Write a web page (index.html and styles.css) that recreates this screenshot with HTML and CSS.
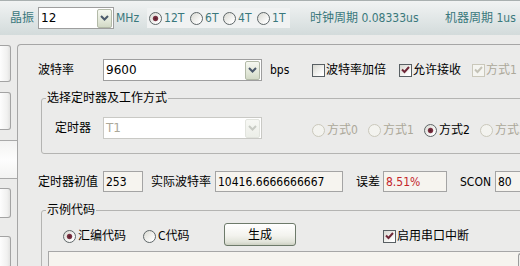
FILE: index.html
```html
<!DOCTYPE html>
<html lang="zh">
<head>
<meta charset="utf-8">
<title>波特率计算</title>
<link rel="stylesheet" href="styles.css">
</head>
<body>
<div class="topbar">
  <span class="t-label">晶振</span>
  <div class="select xtal"><span class="val">12</span><span class="arrow"><svg width="9" height="6" viewBox="0 0 9 6"><path d="M1 1L4.5 4.5L8 1"/></svg></span></div>
  <span class="t-label mhz">MHz</span>
  <div class="t-radios">
    <span class="radio on w41"><i></i>12T</span>
    <span class="radio w33"><i></i>6T</span>
    <span class="radio w34"><i></i>4T</span>
    <span class="radio"><i></i>1T</span>
  </div>
  <span class="t-info clock">时钟周期 0.08333us</span>
  <span class="t-info">机器周期 1us</span>
</div>
<div class="content">
  <div class="sidebar">
    <div class="sgroup first">
      <div class="tab t1"></div>
      <div class="tab t2"></div>
    </div>
    <div class="sgap"></div>
    <div class="sgroup second">
      <div class="tab t3"></div>
      <div class="tab t4"></div>
    </div>
  </div>
  <div class="panel">
    <div class="row r1">
      <span class="lbl w65">波特率</span>
      <div class="select wide"><span class="val">9600</span><span class="arrow"><svg width="9" height="6" viewBox="0 0 9 6"><path d="M1 1L4.5 4.5L8 1"/></svg></span></div>
      <span class="lbl bps">bps</span>
      <span class="check w87"><i></i>波特率加倍</span>
      <span class="check on w73"><i><svg width="9" height="8" viewBox="0 0 9 8"><path d="M1 3.5L3.5 6L8 1"/></svg></i>允许接收</span>
      <span class="check on disabled"><i><svg width="9" height="8" viewBox="0 0 9 8"><path d="M1 3.5L3.5 6L8 1"/></svg></i>方式1</span>
    </div>

    <fieldset class="grp g1">
      <legend>选择定时器及工作方式</legend>
      <div class="row r2">
        <span class="lbl w48">定时器</span>
        <div class="select wide disabled"><span class="val">T1</span><span class="arrow"><svg width="9" height="6" viewBox="0 0 9 6"><path d="M1 1L4.5 4.5L8 1"/></svg></span></div>
        <div class="modes">
          <span class="radio disabled w56"><i></i>方式0</span>
          <span class="radio disabled w56"><i></i>方式1</span>
          <span class="radio on w56"><i></i>方式2</span>
          <span class="radio disabled w56"><i></i>方式3</span>
        </div>
      </div>
    </fieldset>

    <div class="row r3">
      <span class="lbl w65">定时器初值</span>
      <div class="edit w40">253</div>
      <span class="lbl actual">实际波特率</span>
      <div class="edit w128">10416.6666666667</div>
      <span class="lbl err">误差</span>
      <div class="edit w64 red">8.51%</div>
      <span class="lbl scon">SCON</span>
      <div class="edit w40">80</div>
    </div>

    <fieldset class="grp g2">
      <legend>示例代码</legend>
      <div class="row r4">
        <span class="radio on w80"><i></i>汇编代码</span>
        <span class="radio w81"><i></i>C代码</span>
        <span class="btn">生成</span>
        <span class="check on irq"><i><svg width="9" height="8" viewBox="0 0 9 8"><path d="M1 3.5L3.5 6L8 1"/></svg></i>启用串口中断</span>
      </div>
      <div class="code">
        <div class="code-text"></div>
        <div class="code-sb"></div>
      </div>
    </fieldset>
  </div>
</div>
</body>
</html>
```
FILE: styles.css
```css
* { box-sizing: border-box; }
html, body { margin: 0; padding: 0; }
body {
  width: 520px;
  height: 266px;
  overflow: hidden;
  background: #ebebea;
  font-family: "DejaVu Sans Condensed", "DejaVu Sans", "Noto Sans CJK SC", sans-serif;
  font-stretch: semi-condensed;
  font-size: 12px;
  line-height: 16px;
  color: #000;
  white-space: nowrap;
}

/* ---------- top bar ---------- */
.topbar {
  height: 35px;
  border-top: 1px solid #a9b0b0;
  background: linear-gradient(#f1f3f3, #dfe5e5 60%, #d3dbdb);
  display: flex;
  align-items: center;
  padding-left: 10px;
  color: #3a787c;
  overflow: hidden;
}
.t-label { flex-shrink: 0; }
.xtal { margin-left: 4px; width: 76px; height: 20px; }
.xtal .val { font-family: "DejaVu Sans Condensed", "DejaVu Sans", sans-serif; }
.xtal .arrow { height: 18px; }
.mhz { margin-left: 2px; width: 31px; }
.t-radios {
  display: flex;
  align-items: center;
  height: 20px;
  width: 143px;
  flex-shrink: 0;
  padding-left: 2px;
  background: #f0f2f2;
}
.t-info { flex-shrink: 0; }
.clock { margin-left: 20px; width: 135px; }

/* ---------- select ---------- */
.select {
  display: flex;
  align-items: center;
  flex-shrink: 0;
  height: 22px;
  background: #fff;
  border: 1px solid #9e9e9e;
  padding: 0 1px 0 2px;
  color: #000;
}
.select .val {
  flex: 1;
  font-family: "DejaVu Sans", "Noto Sans CJK SC", sans-serif;
  font-stretch: normal;
}
.select .arrow {
  width: 15px;
  height: 19px;
  border: 1px solid #b3baa8;
  border-radius: 2px;
  background: linear-gradient(#f6f8f1, #dfe5d5 70%, #d2d9c6);
  display: flex;
  align-items: center;
  justify-content: center;
}
.select .arrow path { fill: none; stroke: #4b596b; stroke-width: 2; }
.select.disabled { border-color: #c9c9c5; }
.select.disabled .val { color: #aca899; }
.select.disabled .arrow { border-color: #e2e4de; background: linear-gradient(#f7f8f4, #eceee8); }
.select.disabled .arrow path { stroke: #c8cbc4; }
.wide { width: 159px; }

/* ---------- radio / check ---------- */
.radio, .check { display: flex; align-items: center; flex-shrink: 0; }
.radio i {
  width: 13px;
  height: 13px;
  border: 1px solid #5e6668;
  border-radius: 50%;
  background: linear-gradient(135deg, #d9d9d2, #ffffff 85%);
  margin-right: 2px;
  flex-shrink: 0;
}
.radio.on i {
  background: radial-gradient(circle, #5a1d2b 0, #7b3344 2.2px, rgba(123,51,68,0) 3.2px),
              linear-gradient(135deg, #d9d9d2, #ffffff 85%);
}
.radio.disabled { color: #aca899; }
.radio.disabled i { border-color: #cac8bb; background: #f3f3ef; }

.check i {
  width: 13px;
  height: 13px;
  border: 1px solid #585f63;
  background: linear-gradient(135deg, #d8d8d1, #ffffff 85%);
  margin-right: 1px;
  flex-shrink: 0;
  display: flex;
  align-items: center;
  justify-content: center;
}
.check path { fill: none; stroke: #6f2838; stroke-width: 2; }
.check.disabled { color: #aca899; }
.check.disabled i { border-color: #cac8bb; background: #f5f5f1; }
.check.disabled path { stroke: #c4c2b6; }

.w33 { width: 33px; }
.w34 { width: 34px; }
.w41 { width: 41px; }
.w56 { width: 56px; }
.w73 { width: 73px; }
.w80 { width: 80px; }
.w81 { width: 81px; }
.w87 { width: 87px; }

/* ---------- content ---------- */
.content { display: flex; height: 231px; overflow: hidden; }
.sidebar { width: 17px; flex-shrink: 0; display: flex; flex-direction: column; }
.sgroup.first { height: 106px; border-bottom: 1px solid #a9a9a9; padding-top: 10px; }
.sgap { height: 37px; background: linear-gradient(#f3f3f2, #fdfdfd 50%, #f3f3f2); }
.sgroup.second { flex: 1; border-top: 1px solid #a9a9a9; padding-top: 9px; overflow: hidden; }
.tab {
  width: 11px;
  border: 1px solid #a3a3a3;
  border-left: none;
  border-radius: 0 3px 3px 0;
  background: linear-gradient(to right, #fdfdfd, #f1f1f0 70%, #e3e3e2);
}
.t1 { height: 37px; }
.t2 { height: 38px; margin-top: 10px; }
.t3 { height: 30px; }
.t4 { height: 32px; margin-top: 18px; }

.panel {
  flex: 1;
  min-width: 0;
  overflow: hidden;
  margin-top: 9px;
  border-top: 1px solid #a6a6a6;
  border-left: 1px solid #a6a6a6;
  border-top-left-radius: 4px;
  padding: 14px 0 0 20px;
}
.row { display: flex; align-items: center; }
.r1 { height: 22px; }
.lbl { flex-shrink: 0; }
.w65 { width: 65px; }
.w48 { width: 48px; }
.bps { margin-left: 8px; width: 42px; }

.grp {
  margin: 0;
  min-width: 0;
  width: 520px;
  border: 1px solid #b4b4b2;
  border-radius: 3px;
}
.grp legend { padding: 0 1px; line-height: 16px; }
.g1 { margin: 9px 0 0 3px; padding: 11px 0 14px 13px; }
.g1 legend { margin-left: -9px; }
.r2 { height: 22px; }
.modes { display: flex; margin-left: 50px; padding-top: 4px; }

.r3 { height: 21px; margin-top: 17px; }
.edit {
  height: 21px;
  border: 1px solid #a4a4a4;
  background: #f6f4ef;
  padding-left: 2px;
  display: flex;
  align-items: center;
  flex-shrink: 0;
}
.w40 { width: 40px; }
.w64 { width: 64px; }
.w128 { width: 128px; }
.red { color: #c4262b; }
.actual { margin-left: 8px; width: 64px; }
.err { margin-left: 13px; width: 27px; }
.scon { margin-left: 13px; width: 35px; }

.g2 { margin: 10px 0 0 3px; padding: 5px 0 0 6px; }
.g2 legend { margin-left: -2px; }
.r4 { height: 23px; padding-left: 15px; }
.r4 .radio { padding-top: 3px; }
.btn {
  width: 72px;
  height: 23px;
  flex-shrink: 0;
  border: 1px solid #6d7a6a;
  border-radius: 3px;
  background: linear-gradient(#ffffff, #f3f3ee 55%, #e2e4da 85%, #cdd1c3);
  display: flex;
  align-items: center;
  justify-content: center;
}
.irq { margin-left: 87px; padding-top: 3px; }

.code {
  margin-top: 5px;
  height: 40px;
  width: 488px;
  border: 1px solid #a7a7a7;
  background: #f6f4ef;
  display: flex;
}
.code-text { width: 469px; }
.code-sb {
  flex: 1;
  margin-top: 1px;
  border-left: 1px solid #9c9c9c;
  border-top: 1px solid #9c9c9c;
  border-top-left-radius: 3px;
  background: #eeeeea;
}
```
